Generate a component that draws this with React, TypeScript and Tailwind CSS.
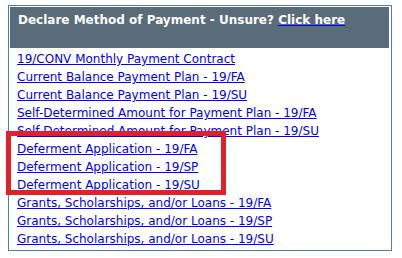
import React from 'react'

const links = [
  '19/CONV Monthly Payment Contract',
  'Current Balance Payment Plan - 19/FA',
  'Current Balance Payment Plan - 19/SU',
  'Self-Determined Amount for Payment Plan - 19/FA',
  'Self-Determined Amount for Payment Plan - 19/SU',
  'Deferment Application - 19/FA',
  'Deferment Application - 19/SP',
  'Deferment Application - 19/SU',
  'Grants, Scholarships, and/or Loans - 19/FA',
  'Grants, Scholarships, and/or Loans - 19/SP',
  'Grants, Scholarships, and/or Loans - 19/SU',
]

export default function App() {
  return (
    <div className="relative w-[402px] h-[258px] bg-white pt-[5px] pl-[8px]" style={{ fontFamily: '"DejaVu Sans", Verdana, sans-serif' }}>
      <div className="w-[384px] h-[246px] border border-[#4a7fb0] p-[1px] pr-[2px]">
        {/* header */}
        <div className="h-[41px] bg-[#5a6b79] pl-[8px] pt-[5px] text-[12px] font-bold leading-[16px] text-white">
          Declare Method of Payment - Unsure?{' '}
          <a href="#" className="underline decoration-[#0000ff] text-white">Click here</a>
        </div>

        <ul className="pl-[7px] pt-[2px] text-[12px] leading-[18px]">
          {links.map((l) => (
            <li key={l}>
              <a href="#" className="text-[#0000ff] underline">{l}</a>
            </li>
          ))}
        </ul>
      </div>

      {/* highlight box */}
      <div className="absolute left-[6px] top-[131px] w-[220px] h-[64px] border-[5px] border-[#e51f2a]" />
    </div>
  )
}
